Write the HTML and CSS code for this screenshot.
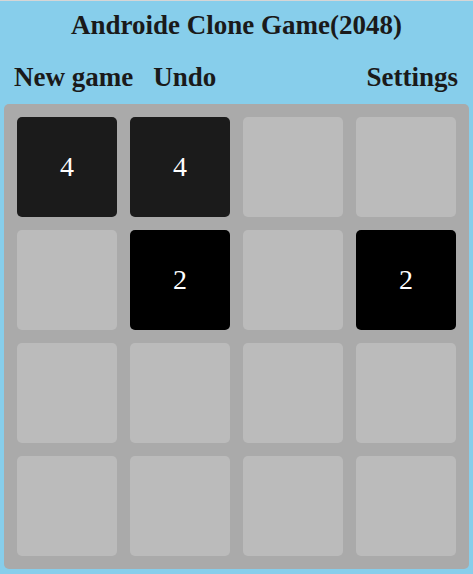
FILE: index.html
```html
<!DOCTYPE html>
<html lang="en">
<head>
    <meta charset="UTF-8">
    <title>Androide Clone Game(2048)</title>
    <link rel="stylesheet" href="styles.css">
</head>
<body>
    <h1 class="title">Androide Clone Game(2048)</h1>
    <div class="menu">
        <span class="menu-item">New game</span>
        <span class="menu-item">Undo</span>
        <span class="menu-item settings">Settings</span>
    </div>
    <div class="board" id="board"></div>

    <script>
        const grid = [
            [4, 4, 0, 0],
            [0, 2, 0, 2],
            [0, 0, 0, 0],
            [0, 0, 0, 0]
        ];

        const board = document.getElementById('board');
        grid.forEach(row => {
            row.forEach(value => {
                const tile = document.createElement('div');
                tile.className = 'tile';
                if (value) {
                    tile.classList.add('tile-' + value);
                    tile.textContent = value;
                }
                board.appendChild(tile);
            });
        });
    </script>
</body>
</html>
```

FILE: styles.css
```css
* {
    margin: 0;
    padding: 0;
    box-sizing: border-box;
}

body {
    background: #87ceeb;
    border-top: 1px solid #d6d6d6;
    font-family: "Liberation Serif", "Times New Roman", serif;
    color: #1a1a1a;
    min-height: 100vh;
}

.title {
    font-size: 27px;
    line-height: 44px;
    padding-top: 2px;
    text-align: center;
    font-weight: bold;
}

.menu {
    display: flex;
    font-size: 27px;
    font-weight: bold;
    line-height: 52px;
    padding: 4px 15px 0 14px;
    gap: 20px;
}

.settings {
    margin-left: auto;
}

.board {
    margin: 1px 4px 0;
    background: #aaaaaa;
    border-radius: 5px;
    padding: 13px;
    display: grid;
    grid-template-columns: repeat(4, 100px);
    grid-auto-rows: 100px;
    gap: 13px;
}

.tile {
    background: #bbbbbb;
    border-radius: 5px;
    display: flex;
    justify-content: center;
    align-items: center;
    color: #fff;
    font-size: 28px;
}

.tile-4 {
    background: #1b1b1b;
}

.tile-2 {
    background: #000;
}
```
